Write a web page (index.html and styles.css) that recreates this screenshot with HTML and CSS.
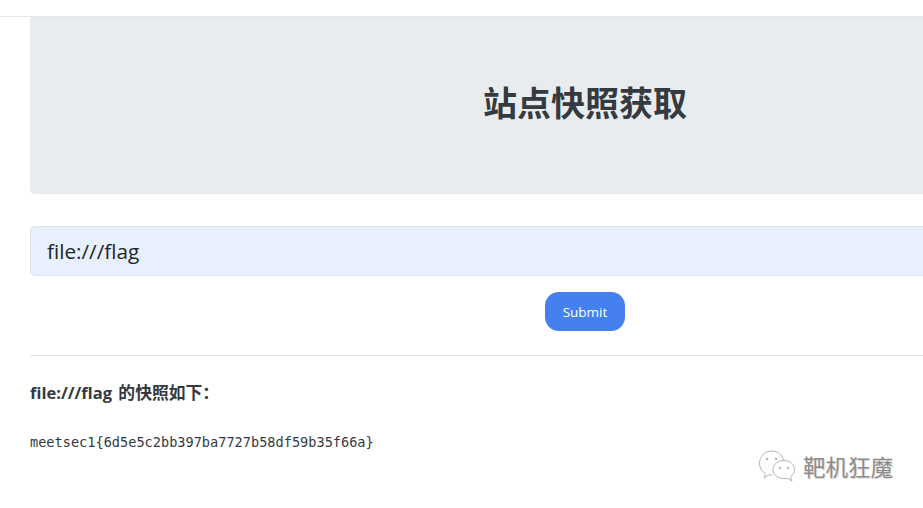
FILE: index.html
```html
<!DOCTYPE html>
<html lang="zh-CN">
<head>
    <meta charset="UTF-8">
    <meta name="viewport" content="width=device-width, initial-scale=1.0">
    <title>站点快照获取</title>
    <link rel="stylesheet" href="styles.css">
</head>
<body>
    <div class="top-line"></div>

    <div class="container">
        <div class="jumbotron">
            <h1>站点快照获取</h1>
        </div>

        <form class="snap-form">
            <input type="text" class="url-input" value="file:///flag">
            <button type="button" class="submit-btn">Submit</button>
        </form>

        <hr class="divider">

        <h3 class="result-title">file:///flag <span class="cjk-gap">的快照如下：</span></h3>
        <pre class="result-body">meetsec1{6d5e5c2bb397ba7727b58df59b35f66a}</pre>
    </div>

    <!-- watermark -->
    <div class="watermark">
        <svg class="wm-icon" width="38" height="34" viewBox="0 0 38 34" fill="none" stroke="#b4b4b4" stroke-width="1">
            <path d="M14 26c-1 0-2-.1-3-.3L6.500 29l.8-4.600C4 22.400 1.500 19 1.500 14.500 1.500 7.500 7 2 13.500 2S24.500 6 25.500 11.500"/>
            <path d="M26 11.500c6 0 10.500 4 10.500 9 0 3-1.500 5.500-4 7.300l1.500 4.200-5-2.700c-1 .2-2 .3-3 .3-6 0-11-3.800-11-9s5-9.100 11-9.100z"/>
            <circle cx="9" cy="10" r="1.200" fill="#b4b4b4" stroke="none"/>
            <circle cx="18" cy="10" r="1.200" fill="#b4b4b4" stroke="none"/>
            <circle cx="22" cy="19" r="1.200" fill="#b4b4b4" stroke="none"/>
            <circle cx="30" cy="19" r="1.200" fill="#b4b4b4" stroke="none"/>
        </svg>
        <span class="wm-text">靶机狂魔</span>
    </div>
</body>
</html>
```

FILE: styles.css
```css
html, body {
    margin: 0;
    padding: 0;
    height: 100%;
    overflow: hidden;
}

body {
    position: relative;
    font-family: "Noto Sans", "Noto Sans CJK SC", sans-serif;
    color: #212529;
    background-color: #fff;
}

.top-line {
    height: 16px;
    border-bottom: 1px solid #e6e6e6;
}

.container {
    width: 1110px;
    margin-left: 30px;
}

.jumbotron {
    height: 177px;
    padding-bottom: 8px;
    box-sizing: border-box;
    background-color: #e9ecef;
    border-radius: 0 0 5px 5px;
    display: flex;
    align-items: center;
    justify-content: center;
}

h1 {
    margin: 0;
    font-size: 34px;
    font-weight: 700;
    color: #343a40;
    font-family: "Noto Sans CJK SC", sans-serif;
}

.snap-form {
    margin-top: 32px;
    display: flex;
    flex-direction: column;
    align-items: center;
}

.url-input {
    box-sizing: border-box;
    width: 100%;
    height: 50px;
    padding: 0 16px;
    font-family: "Open Sans", sans-serif;
    font-size: 20.700px;
    color: #212529;
    background-color: #e8f0fe;
    border: 1px solid #dee2e6;
    border-radius: 5px;
}

.submit-btn {
    margin-top: 16px;
    width: 80px;
    height: 39px;
    background-color: #4580f0;
    color: #fff;
    border: none;
    border-radius: 14px;
    font-family: "Open Sans", sans-serif;
    font-size: 13.500px;
}

.divider {
    margin: 24px 0 0;
    border: none;
    border-top: 1px solid #e3e3e3;
}

.result-title {
    margin: 26px 0 0;
    font-size: 16.500px;
    line-height: 22px;
    font-weight: 700;
    color: #343a40;
    font-family: "Open Sans", "Noto Sans CJK SC", sans-serif;
}

.cjk-gap {
    margin-left: 2px;
    font-size: 16.800px;
}

.result-body {
    margin: 29px 0 0;
    font-family: "DejaVu Sans Mono", monospace;
    font-size: 13.600px;
    line-height: 18px;
    color: #343a40;
}

.watermark {
    position: absolute;
    left: 758px;
    top: 449px;
    display: flex;
    align-items: center;
    gap: 7px;
}

.wm-text {
    font-family: "Noto Sans CJK SC", sans-serif;
    font-size: 22.500px;
    line-height: 34px;
    color: #8c8c8c;
    text-shadow: 1px 1px 0 #ddd;
}
```
